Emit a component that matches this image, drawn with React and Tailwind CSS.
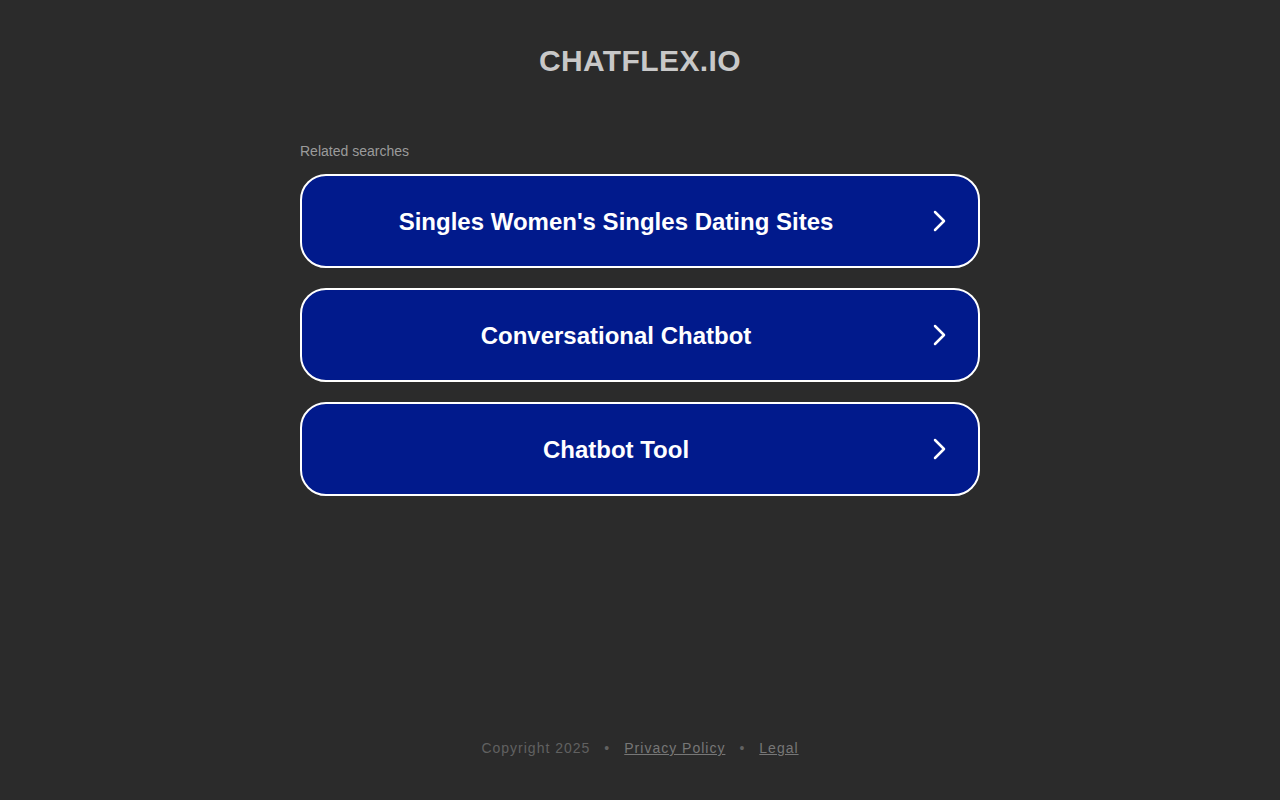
import React from "react";

const items = [
  "Singles Women's Singles Dating Sites",
  "Conversational Chatbot",
  "Chatbot Tool",
];

function Chevron() {
  return (
    <svg width="20" height="24" viewBox="0 0 20 24" fill="none" className="shrink-0">
      <path d="M5 3 L14 12 L5 21" stroke="white" strokeWidth="2.5" strokeLinecap="round" strokeLinejoin="round" />
    </svg>
  );
}

export default function App() {
  return (
    <div
      className="min-h-[800px] bg-[#2b2b2b] flex flex-col items-center"
      style={{ fontFamily: '"Liberation Sans", Arial, sans-serif' }}
    >
      <div className="pt-[43px] h-[138px] text-[30px] font-bold leading-[36px] text-[#c8c8c8] tracking-[0.4px]">
        CHATFLEX.IO
      </div>
      <div className="w-[680px] flex flex-col">
        <div className="text-[14px] leading-[26px] text-[#9b9b9b] mb-[10px]">Related searches</div>
        <div className="flex flex-col gap-[20px]">
          {items.map((t) => (
            <div
              key={t}
              className="h-[94px] rounded-[26px] border-2 border-white bg-[#011a8c] flex items-center pr-[28px]"
            >
              <div className="flex-1 text-center text-[24px] font-bold text-white leading-[30px] pt-[2px]">{t}</div>
              <Chevron />
            </div>
          ))}
        </div>
      </div>
      <div className="flex-1" />
      <div className="pb-[41px] text-[14px] tracking-[1px] text-[#616161] flex items-center gap-[14px]">
        <span>Copyright 2025</span>
        <span>•</span>
        <span className="underline text-[#777777]">Privacy Policy</span>
        <span>•</span>
        <span className="underline text-[#777777]">Legal</span>
      </div>
    </div>
  );
}
